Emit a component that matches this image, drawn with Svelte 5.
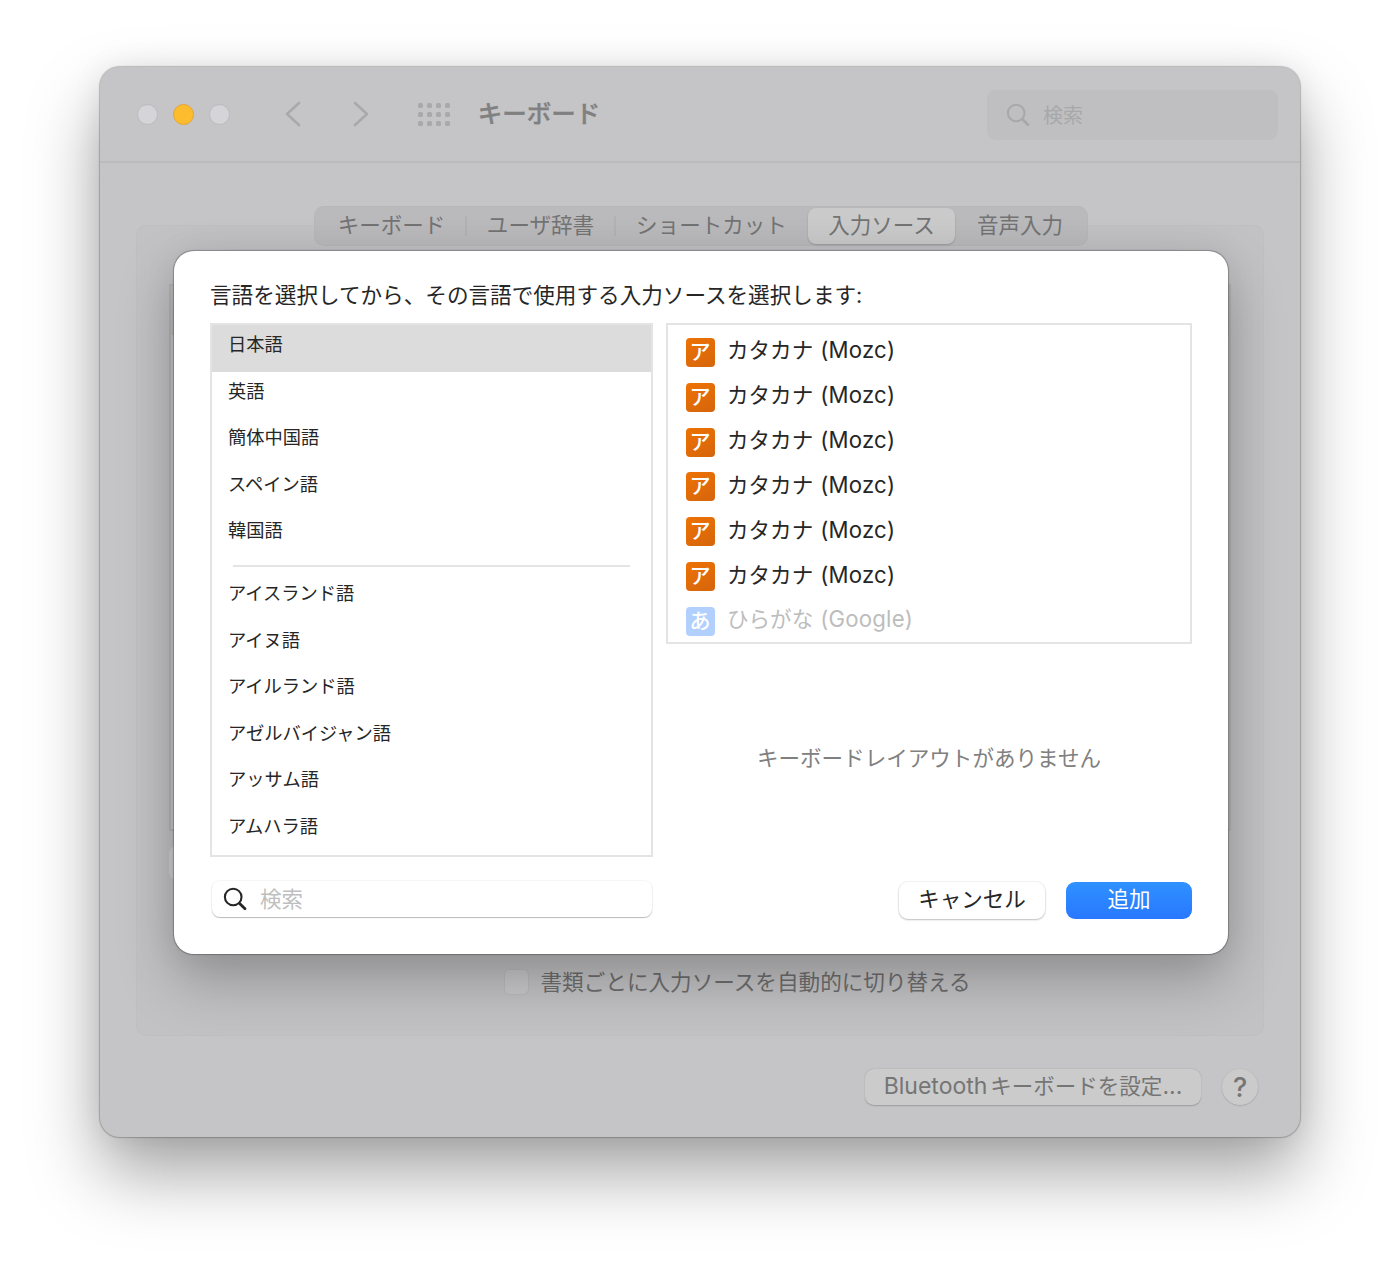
<script>
  const tabs = ['キーボード', 'ユーザ辞書', 'ショートカット', '入力ソース', '音声入力'];
  const activeTab = 3;
  const frequent = ['日本語', '英語', '簡体中国語', 'スペイン語', '韓国語'];
  const others = ['アイスランド語', 'アイヌ語', 'アイルランド語', 'アゼルバイジャン語', 'アッサム語', 'アムハラ語'];
  const sources = [
    ...Array.from({ length: 6 }, () => ({ glyph: 'ア', name: 'カタカナ', engine: '(Mozc)', disabled: false })),
    { glyph: 'あ', name: 'ひらがな', engine: '(Google)', disabled: true }
  ];
</script>

{#snippet magnifier()}
  <svg class="magnifier" viewBox="0 0 24 24" width="24" height="24" fill="none" stroke="currentColor">
    <circle cx="10.2" cy="10" r="8.3" stroke-width="2.1" />
    <path d="M16.6 16.4 L22 21.8" stroke-width="2.8" stroke-linecap="round" />
  </svg>
{/snippet}

<div class="desktop">
  <main class="window">
    <header class="titlebar">
      <div class="lights"><i></i><i class="minimize"></i><i></i></div>
      <div class="arrows">
        <svg viewBox="0 0 16 26" width="16" height="26"><path d="M14 2 L2 13 L14 24" /></svg>
        <svg viewBox="0 0 16 26" width="16" height="26"><path d="M2 2 L14 13 L2 24" /></svg>
      </div>
      <div class="dots">
        {#each Array(12) as _}<i></i>{/each}
      </div>
      <h1>キーボード</h1>
      <div class="toolbar-search">{@render magnifier()}<span>検索</span></div>
    </header>

    <div class="body">
      <nav class="tabs">
        {#each tabs as tab, i}
          <div class="tab t{i}" class:active={i === activeTab}>{tab}</div>
        {/each}
      </nav>
      <section class="panel">
        <div class="table"><div class="table-head"></div></div>
        <div class="table-button"></div>
        <label class="auto-switch"><i class="checkbox"></i>書類ごとに入力ソースを自動的に切り替える</label>
      </section>
      <footer class="footer">
        <div class="button muted">Bluetooth<span class="kana">キーボードを設定</span>...</div>
        <div class="help">?</div>
      </footer>
    </div>

    <div class="sheet">
      <p class="prompt">言語を選択してから、その言語で使用する入力ソースを選択します:</p>
      <div class="columns">
        <div class="left">
          <div class="languages">
            {#each frequent as name, i}
              <div class="language" class:selected={i === 0}>{name}</div>
            {/each}
            <div class="separator"></div>
            {#each others as name}
              <div class="language">{name}</div>
            {/each}
          </div>
          <div class="search">{@render magnifier()}<span>検索</span></div>
        </div>
        <div class="right">
          <div class="sources">
            {#each sources as source}
              <div class="source" class:disabled={source.disabled}>
                <span class="badge">{source.glyph}</span>
                <span class="name">{source.name} <span class="engine">{source.engine}</span></span>
              </div>
            {/each}
          </div>
          <div class="empty">キーボードレイアウトがありません</div>
          <div class="actions">
            <div class="button cancel">キャンセル</div>
            <div class="button add">追加</div>
          </div>
        </div>
      </div>
    </div>
  </main>
</div>

<style>
  :global(body) {
    background: #fff;
  }
  .desktop, .desktop :global(*) {
    box-sizing: border-box;
  }
  .desktop {
    width: 1400px;
    height: 1270px;
    padding: 67px 100px 0;
    overflow: hidden;
    font-family: Inter, 'Noto Sans CJK JP', sans-serif;
    font-size: 21.55px;
    line-height: 30px;
    white-space: nowrap;
    color: #262626;
  }
  .window {
    position: relative;
    width: 1200px;
    height: 1070px;
    border-radius: 20px;
    background: #c5c5c7;
    box-shadow: 0 0 1px 0.5px rgba(0, 0, 0, 0.22), 0 36px 70px rgba(0, 0, 0, 0.36), 0 0 30px rgba(0, 0, 0, 0.08);
    color: #757576;
  }
  .titlebar {
    display: flex;
    align-items: center;
    height: 96px;
    padding: 1px 22px 0 37px;
    border-bottom: 2px solid #bbbbbd;
  }
  .lights {
    display: flex;
    gap: 15px;
    margin-left: -0.5px;
  }
  .lights i {
    width: 21px;
    height: 21px;
    border-radius: 50%;
    background: #d4d4d9;
    border: 1px solid #bbbbbd;
  }
  .lights .minimize {
    background: #fdbc2e;
    border-color: #e3a533;
  }
  .arrows {
    display: flex;
    gap: 52px;
    margin-left: 55.5px;
    padding-bottom: 2px;
  }
  .arrows path {
    fill: none;
    stroke: #a9a9ab;
    stroke-width: 2.6;
    stroke-linecap: round;
    stroke-linejoin: round;
  }
  .dots {
    display: grid;
    grid-template-columns: repeat(4, 5px);
    gap: 4px 3.9px;
    margin-left: 49px;
  }
  .dots i {
    width: 5px;
    height: 5px;
    border-radius: 1.5px;
    background: #a9a9ab;
  }
  h1 {
    margin: 0 0 0 28px;
    padding-bottom: 1px;
    font-size: 24.5px;
    font-weight: 500;
    -webkit-text-stroke: 0.4px #808081;
    color: #808081;
  }
  .toolbar-search {
    display: flex;
    align-items: center;
    gap: 13px;
    width: 291px;
    height: 50px;
    margin-left: auto;
    padding-left: 19px;
    border-radius: 9px;
    background: #bfbfc1;
    color: #a8a8aa;
    font-size: 20px;
  }
  .toolbar-search span {
    padding-top: 3px;
  }
  .body {
    padding: 43px 36px 0;
  }
  .tabs {
    position: relative;
    z-index: 1;
    display: flex;
    width: 774px;
    height: 40px;
    margin: 0 auto;
    padding: 2px 0 2px 3px;
    border-radius: 10px;
    background: #bababc;
    box-shadow: inset 0 0 1px 1px rgba(0, 0, 0, 0.02);
    transform: translateX(1px);
  }
  .tab {
    position: relative;
    flex: none;
    height: 36px;
    line-height: 35px;
    text-align: center;
    color: #737374;
  }
  .t0 { width: 149px; }
  .t1 { width: 149px; }
  .t2 { width: 193px; }
  .t3 { width: 147px; }
  .t4 { width: 132px; padding-right: 2px; }
  .t0::after, .t1::after {
    content: '';
    position: absolute;
    right: -1px;
    top: 8px;
    width: 2px;
    height: 20px;
    background: #b2b2b4;
  }
  .active {
    border-radius: 8px;
    background: #cacaca;
    box-shadow: 0 1px 2px rgba(0, 0, 0, 0.18);
  }
  .panel {
    height: 811px;
    margin-top: -21px;
    padding: 58px 32px 0;
    border: 1px solid #bfbfc1;
    border-radius: 10px;
    background: #c2c2c4;
  }
  .table {
    height: 547px;
    border: 2px solid #b5b5b5;
    background: #c7c7c7;
  }
  .table-head {
    height: 49px;
    background: #bcbcbd;
  }
  .table-button {
    width: 80px;
    height: 34px;
    margin-top: 15px;
    border-radius: 8px;
    background: #cecece;
  }
  .auto-switch {
    display: flex;
    align-items: center;
    gap: 12.5px;
    margin: 87px 0 0 336px;
    color: #6e6e6e;
    font-size: 21.6px;
  }
  .checkbox {
    width: 23px;
    height: 24px;
    border-radius: 5px;
    background: #c9c9cb;
    box-shadow: 0 0 1px 1px rgba(0, 0, 0, 0.04);
  }
  .footer {
    display: flex;
    justify-content: flex-end;
    gap: 21px;
    padding: 33px 6px 0 0;
  }
  .button {
    height: 37px;
    border-radius: 9px;
    line-height: 34px;
    text-align: center;
  }
  .muted {
    width: 336px;
    height: 36px;
    background: #cbcbcb;
    box-shadow: 0 0.5px 1.5px rgba(0, 0, 0, 0.22);
    font-size: 23px;
  }
  .kana {
    margin-left: 3px;
    font-size: 21.5px;
  }
  .help {
    width: 36px;
    height: 36px;
    border-radius: 50%;
    background: #cbcbcb;
    box-shadow: 0 0.5px 1.5px rgba(0, 0, 0, 0.22);
    text-align: center;
    line-height: 37px;
    font-size: 27px;
    font-weight: 500;
  }
  .sheet {
    position: absolute;
    z-index: 2;
    left: 74px;
    top: 184px;
    width: 1054px;
    height: 703px;
    padding: 29px 36px 0;
    border-radius: 20px;
    background: #fff;
    box-shadow: 0 0 1px 0.5px rgba(0, 0, 0, 0.26), 0 26px 56px rgba(0, 0, 0, 0.25), 0 0 36px rgba(0, 0, 0, 0.06);
    color: #262626;
  }
  .prompt {
    margin: 0 0 13px;
    font-size: 21.6px;
  }
  .columns {
    display: flex;
    gap: 13px;
  }
  .left {
    width: 443px;
  }
  .languages {
    height: 534px;
    border: 2px solid #e4e4e4;
    font-size: 18.25px;
  }
  .language {
    height: 46.6px;
    padding-left: 16px;
    line-height: 38.6px;
  }
  .selected {
    background: #dcdcdc;
  }
  .separator {
    height: 2px;
    margin: 7px 21px 7px;
    background: #e4e4e4;
  }
  .search {
    display: flex;
    align-items: center;
    gap: 13px;
    height: 36px;
    margin: 24px 1px 0 2px;
    padding-left: 11px;
    border-radius: 8px;
    box-shadow: 0 0 1px 1px rgba(0, 0, 0, 0.04), 0 1px 1px rgba(0, 0, 0, 0.24);
  }
  .search span {
    color: #bfbfbf;
  }
  .right {
    width: 526px;
  }
  .sources {
    height: 321px;
    padding: 5px 17.5px 0;
    border: 2px solid #e4e4e4;
    overflow: hidden;
  }
  .source {
    display: flex;
    align-items: center;
    gap: 12.5px;
    height: 44.85px;
  }
  .name {
    padding-bottom: 4px;
  }
  .engine {
    margin-left: 1px;
    font-size: 22.2px;
    letter-spacing: 0.2px;
  }
  .badge {
    width: 29px;
    height: 29px;
    border-radius: 4px;
    background: linear-gradient(150deg, #ee7203, #d5650c);
    color: #fff;
    font-size: 21px;
    font-weight: 500;
    line-height: 28px;
    text-align: center;
  }
  .disabled {
    color: #bdbdbd;
  }
  .disabled .badge {
    background: #b2d0fd;
  }
  .empty {
    height: 238px;
    padding-top: 99px;
    text-align: center;
    color: #808080;
  }
  .actions {
    display: flex;
    justify-content: flex-end;
    gap: 21px;
  }
  .cancel {
    width: 146px;
    box-shadow: 0 0 1px 1px rgba(0, 0, 0, 0.05), 0 1px 2px rgba(0, 0, 0, 0.22);
  }
  .add {
    width: 126px;
    background: linear-gradient(#2f91ff, #2878ff);
    color: #fff;
  }
</style>
